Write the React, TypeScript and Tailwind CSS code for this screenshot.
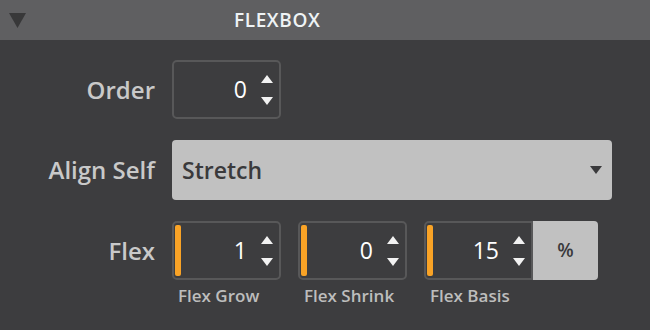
import React from "react";

const font = { fontFamily: '"Open Sans", "Liberation Sans", sans-serif' };

function Spinner() {
  return (
    <div className="flex flex-col items-center gap-[14px]">
      <svg width="12" height="8" viewBox="0 0 12 8">
        <polygon points="6,0 12,8 0,8" fill="#f2f2f2" />
      </svg>
      <svg width="12" height="8" viewBox="0 0 12 8">
        <polygon points="0,0 12,0 6,8" fill="#f2f2f2" />
      </svg>
    </div>
  );
}

function NumberBox({
  value,
  accent,
  rounded = "rounded-[5px]",
}: {
  value: string;
  accent?: boolean;
  rounded?: string;
}) {
  return (
    <div
      className={`relative flex h-[59px] w-[109px] items-center justify-end border-2 border-[#585859] ${rounded} pr-[6px]`}
    >
      {accent && (
        <div className="absolute left-[1px] top-[2px] bottom-[2px] w-[6px] rounded-[2px] bg-[#f9a326]" />
      )}
      <span className="mr-[14px] text-[23px] leading-none text-white">{value}</span>
      <Spinner />
    </div>
  );
}

function Label({ children }: { children: React.ReactNode }) {
  return (
    <div className="w-[155px] shrink-0 text-right text-[24px] font-semibold leading-none text-[#c9c9c9]">
      {children}
    </div>
  );
}

export default function App() {
  return (
    <div className="h-[330px] w-[650px] bg-[#3d3d3f]" style={font}>
      <div className="relative flex h-[40px] items-center bg-[#5f5f61]">
        <svg className="absolute left-[9px] top-[13px]" width="17" height="15" viewBox="0 0 17 15">
          <polygon points="0,0 17,0 8.5,15" fill="#383839" />
        </svg>
        <div className="ml-[234px] text-[19px] font-semibold tracking-[0.6px] text-[#eef3f5]">
          FLEXBOX
        </div>
      </div>

      <div className="flex flex-col gap-[21px] pt-[20px]">
        <div className="flex items-center gap-[17px]">
          <Label>Order</Label>
          <NumberBox value="0" />
        </div>

        <div className="flex items-center gap-[17px]">
          <Label>Align Self</Label>
          <div className="flex h-[60px] w-[440px] items-center justify-between rounded-[4px] bg-[#c1c1c1] pl-[10px] pr-[10px]">
            <span className="text-[23px] font-semibold text-[#3a3a3c]">Stretch</span>
            <svg width="12" height="8" viewBox="0 0 12 8">
              <polygon points="0,0 12,0 6,8" fill="#3a3a3c" />
            </svg>
          </div>
        </div>

        <div className="flex gap-[17px]">
          <div className="flex h-[59px] items-center">
            <Label>Flex</Label>
          </div>
          <div className="flex gap-[17px]">
            <div className="flex flex-col">
              <NumberBox value="1" accent />
              <div className="mt-[3px] pl-[6px] text-[17px] font-semibold text-[#bdbdbd]">Flex Grow</div>
            </div>
            <div className="flex flex-col">
              <NumberBox value="0" accent />
              <div className="mt-[3px] pl-[6px] text-[17px] font-semibold text-[#bdbdbd]">Flex Shrink</div>
            </div>
            <div className="flex flex-col">
              <div className="flex">
                <NumberBox value="15" accent rounded="rounded-l-[5px]" />
                <div className="flex h-[59px] w-[65px] items-center justify-center rounded-r-[4px] bg-[#c1c1c1] text-[19px] font-semibold text-[#3a3a3c]">
                  %
                </div>
              </div>
              <div className="mt-[3px] pl-[6px] text-[17px] font-semibold text-[#bdbdbd]">Flex Basis</div>
            </div>
          </div>
        </div>
      </div>
    </div>
  );
}
